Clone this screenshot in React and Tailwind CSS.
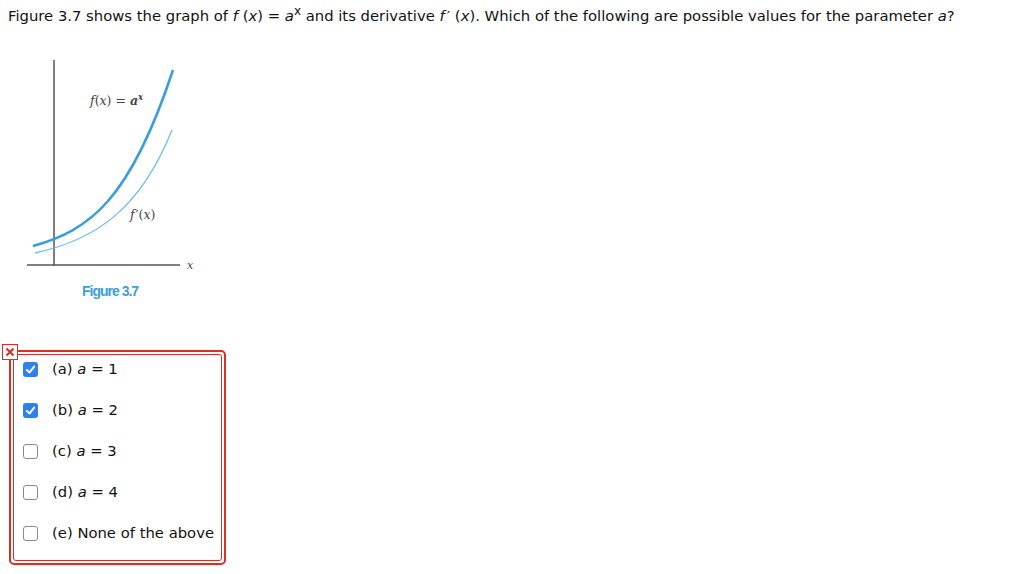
import React from "react";

const options = [
  { label: "(a)", math: "a = 1", checked: true },
  { label: "(b)", math: "a = 2", checked: true },
  { label: "(c)", math: "a = 3", checked: false },
  { label: "(d)", math: "a = 4", checked: false },
  { label: "(e)", text: "None of the above", checked: false },
];

const Figure = () => (
  <svg width="200" height="260" viewBox="0 0 200 260" className="block">
    {/* axes, origin of svg is page (20,50) */}
    <line x1="34" y1="10" x2="34" y2="216" stroke="#555" strokeWidth="1.5" />
    <line x1="7" y1="215" x2="160" y2="215" stroke="#555" strokeWidth="1.5" />
    <text x="167" y="219" fontFamily="'DejaVu Serif', serif" fontStyle="italic" fontSize="11" fill="#444">x</text>
    {/* f(x) */}
    <path d="M13 196 C 70 180, 110 150, 153 20" fill="none" stroke="#3a9fd8" strokeWidth="2.6" />
    {/* f'(x) */}
    <path d="M15 203 C 75 190, 120 160, 152 80" fill="none" stroke="#6cbde8" strokeWidth="1.3" />
    <text x="70" y="55" fontFamily="'DejaVu Serif', serif" fontSize="12.5" fill="#444">
      <tspan fontStyle="italic">f</tspan>(<tspan fontStyle="italic">x</tspan>) = <tspan fontStyle="italic" fontWeight="bold">a</tspan><tspan fontStyle="italic" fontWeight="bold" fontSize="8.5" dy="-5">x</tspan>
    </text>
    <text x="110" y="169" fontFamily="'DejaVu Serif', serif" fontSize="12.5" fill="#444">
      <tspan fontStyle="italic">f</tspan><tspan fontFamily="'DejaVu Sans', sans-serif" dx="1">′</tspan>(<tspan fontStyle="italic">x</tspan>)
    </text>
    <text x="62" y="246" fontFamily="'Liberation Sans', sans-serif" fontWeight="bold" fontSize="14" fill="#3a9fd8" letterSpacing="-1">Figure 3.7</text>
  </svg>
);

const Box = ({ checked }) =>
  checked ? (
    <span className="w-[15px] h-[15px] rounded-[3px] bg-[#2f7ff0] flex items-center justify-center">
      <svg width="11" height="11" viewBox="0 0 12 12">
        <path d="M2 6.5 L5 9.2 L10 2.8" fill="none" stroke="white" strokeWidth="2.2" strokeLinecap="round" strokeLinejoin="round" />
      </svg>
    </span>
  ) : (
    <span className="w-[15px] h-[15px] rounded-[3px] border border-[#8a8a8a] bg-white" />
  );

export default function App() {
  return (
    <div className="w-[1024px] h-[574px] bg-white text-[#111] overflow-hidden" style={{ fontFamily: "Verdana, 'DejaVu Sans', sans-serif" }}>
      <p className="pl-[8px] pt-[6px] text-[14.8px] leading-[20px]">
        Figure 3.7 shows the graph of <i>f</i> (<i>x</i>) = <i>a</i><sup className="text-[12px]">x</sup> and its derivative <i>f</i><span className="ml-[2px]">′</span> (<i>x</i>). Which of the following are possible values for the parameter <i>a</i>?
      </p>
      <div className="ml-[20px] mt-[24px]">
        <Figure />
      </div>
      <div className="relative mt-[40px]">
        <span className="absolute left-[2px] top-[-6px] w-[16px] h-[16px] border border-[#d93025] bg-white flex items-center justify-center z-10">
          <svg width="10" height="10" viewBox="0 0 10 10">
            <path d="M1.5 1.5 L8.5 8.5 M8.5 1.5 L1.5 8.5" stroke="#d93025" strokeWidth="2.2" />
          </svg>
        </span>
        <div className="ml-[9px] w-[217px] h-[215px] border-2 border-[#d93025] rounded-[5px] p-[2px]">
          <div className="w-full h-full border border-[#d93025] rounded-[3px] pt-[4px] pl-[9px] flex flex-col gap-[21px]">
            {options.map((o) => (
              <div key={o.label} className="h-[20px] flex items-center gap-[14px] text-[14.8px] whitespace-nowrap">
                <Box checked={o.checked} />
                <span>
                  {o.label}{" "}
                  {o.math ? (
                    <>
                      <i>a</i> = {o.math.slice(4)}
                    </>
                  ) : (
                    o.text
                  )}
                </span>
              </div>
            ))}
          </div>
        </div>
      </div>
    </div>
  );
}
